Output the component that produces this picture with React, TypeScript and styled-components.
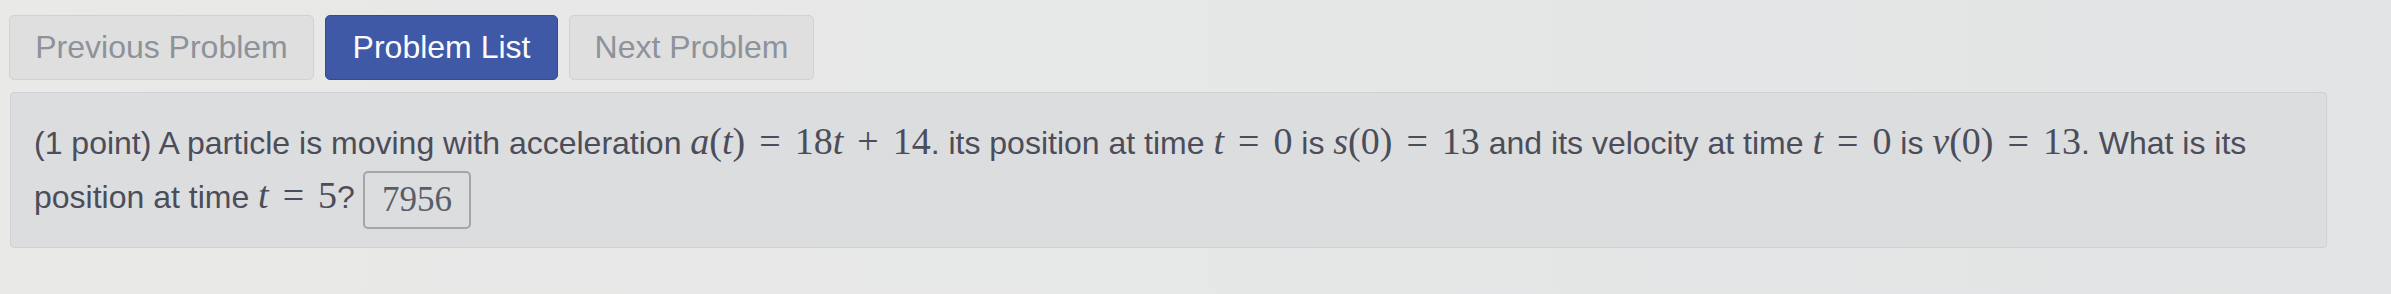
import React from "react";
import styled, { createGlobalStyle } from "styled-components";

const GlobalStyle = createGlobalStyle`
  html, body {
    margin: 0;
    padding: 0;
    background: linear-gradient(90deg, #e9e9e7 0%, #e6e7e7 50%, #e2e4e5 100%);
  }
  body {
    font-family: "Liberation Sans", Arial, sans-serif;
    width: 2391px;
    height: 294px;
    overflow: hidden;
  }
`;

const Page = styled.div`
  padding: 15px 0 0 9px;
  display: flex;
  flex-direction: column;
  gap: 12px;
`;

const NavBar = styled.div`
  display: flex;
  gap: 11px;
`;

const NavButton = styled.button<{ $primary?: boolean; $width: number }>`
  width: ${(p) => p.$width}px;
  height: 65px;
  border-radius: 5px;
  border: 1px solid ${(p) => (p.$primary ? "#34499a" : "#d0d1d1")};
  background: ${(p) => (p.$primary ? "#3f59a7" : "#dfdfdf")};
  color: ${(p) => (p.$primary ? "#fbfbfd" : "#8d929b")};
  font-family: "Liberation Sans", Arial, sans-serif;
  font-size: 32px;
  padding: 0;
  display: flex;
  align-items: center;
  justify-content: center;
`;

const ProblemPanel = styled.div`
  width: 2317px;
  box-sizing: border-box;
  margin-left: 1px;
  background: #dcddde;
  border: 1px solid #cfd1d3;
  border-radius: 4px;
  padding: 23px 23px 18px 23px;
  color: #4b4d5a;
  font-size: 32px;
  line-height: 54px;
`;

const MathVar = styled.span`
  font-family: "Liberation Serif", "Times New Roman", serif;
  font-style: italic;
  font-size: 38px;
  line-height: 1;
`;

const MathNum = styled.span`
  font-family: "Liberation Serif", "Times New Roman", serif;
  font-size: 38px;
  line-height: 1;
`;

const MathOp = styled.span`
  font-family: "Liberation Serif", "Times New Roman", serif;
  font-size: 38px;
  line-height: 1;
  margin: 0 14px;
`;

const AnswerBox = styled.span`
  display: inline-flex;
  align-items: center;
  justify-content: center;
  vertical-align: middle;
  box-sizing: border-box;
  width: 108px;
  height: 58px;
  margin-left: 8px;
  border: 2px solid #a3a5aa;
  border-radius: 5px;
  font-family: "Liberation Serif", "Times New Roman", serif;
  font-size: 35px;
  line-height: 1;
  color: #5a5d68;
`;

const Eq = () => <MathOp>=</MathOp>;

export default function App() {
  return (
    <>
      <GlobalStyle />
      <Page>
        <NavBar>
          <NavButton $width={305}>Previous Problem</NavButton>
          <NavButton $width={233} $primary>
            Problem List
          </NavButton>
          <NavButton $width={245}>Next Problem</NavButton>
        </NavBar>
        <ProblemPanel>
          (1 point) A particle is moving with acceleration <MathVar>a</MathVar>
          <MathNum>(</MathNum>
          <MathVar>t</MathVar>
          <MathNum>)</MathNum>
          <Eq />
          <MathNum>18</MathNum>
          <MathVar>t</MathVar>
          <MathOp>+</MathOp>
          <MathNum>14</MathNum>. its position at time <MathVar>t</MathVar>
          <Eq />
          <MathNum>0</MathNum> is <MathVar>s</MathVar>
          <MathNum>(0)</MathNum>
          <Eq />
          <MathNum>13</MathNum> and its velocity at time <MathVar>t</MathVar>
          <Eq />
          <MathNum>0</MathNum> is <MathVar>v</MathVar>
          <MathNum>(0)</MathNum>
          <Eq />
          <MathNum>13</MathNum>. What is its position at time <MathVar>t</MathVar>
          <Eq />
          <MathNum>5</MathNum>?<AnswerBox>7956</AnswerBox>
        </ProblemPanel>
      </Page>
    </>
  );
}
